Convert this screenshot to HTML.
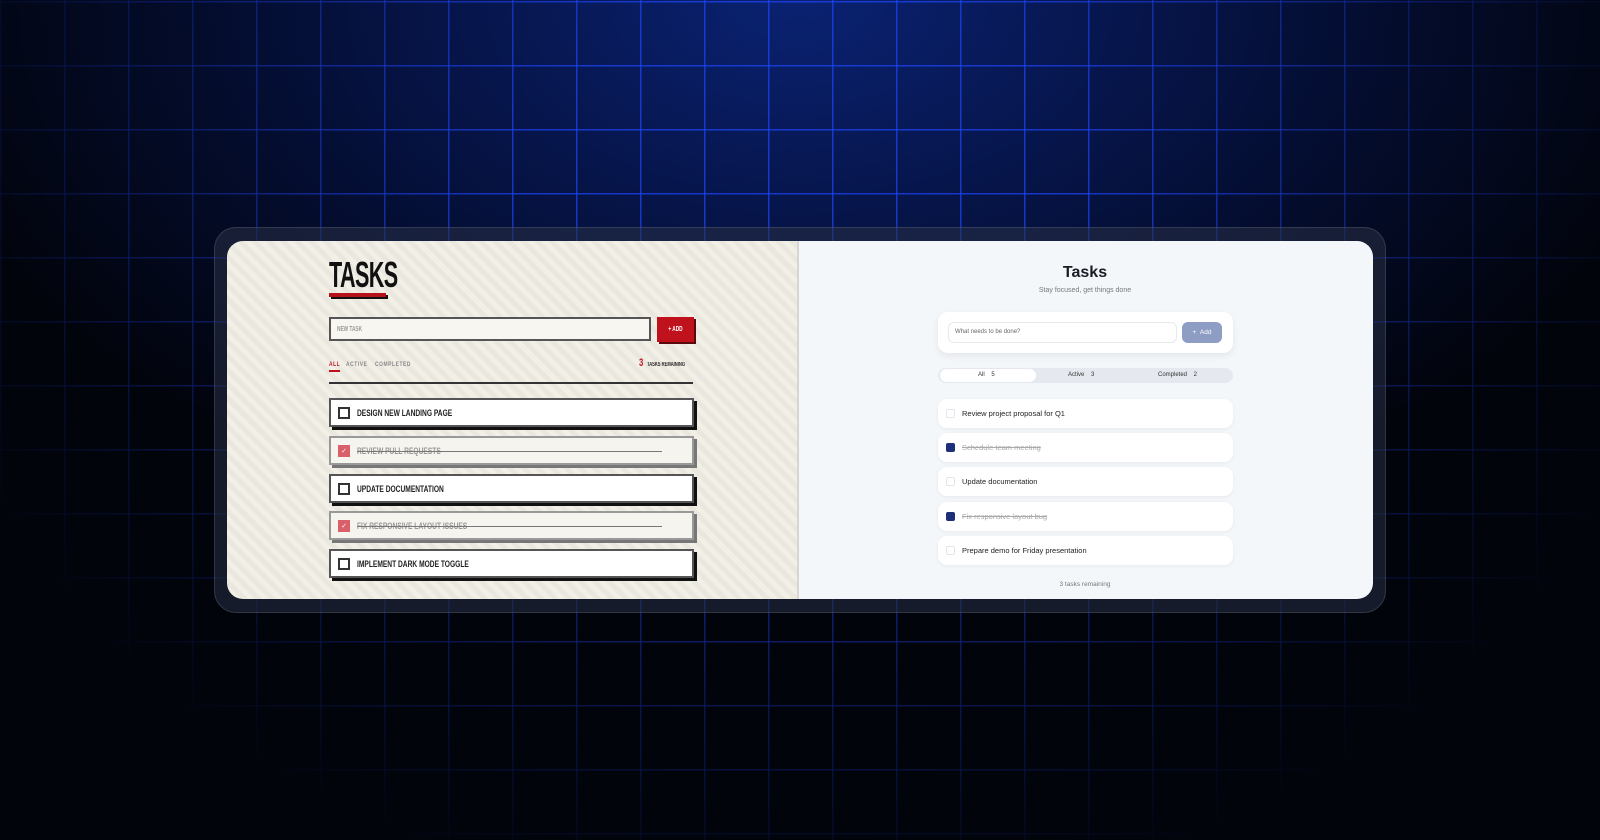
<!DOCTYPE html>
<html><head><meta charset="utf-8"><style>
*{margin:0;padding:0;box-sizing:border-box}
body{width:1600px;height:840px;overflow:hidden;background:#02040c;position:relative;font-family:"Liberation Sans",sans-serif}
.bg{position:absolute;inset:0;background:radial-gradient(ellipse 900px 560px at 800px 0px,#0a2272 0%,#061448 40%,#030a24 75%,#02040c 100%)}
.grid{position:absolute;inset:0;background-image:linear-gradient(to right,rgba(30,70,255,.7) 1.5px,transparent 1.5px),linear-gradient(to bottom,rgba(30,70,255,.7) 1.5px,transparent 1.5px);background-size:64px 64px;background-position:0 1px;
-webkit-mask-image:radial-gradient(ellipse 900px 720px at 800px 200px,#000 30%,rgba(0,0,0,.4) 70%,transparent 100%);mask-image:radial-gradient(ellipse 900px 720px at 800px 200px,#000 30%,rgba(0,0,0,.4) 70%,transparent 100%)}
.frame{position:absolute;left:214px;top:227px;width:1172px;height:386px;border-radius:22px;background:rgba(40,48,70,.55);border:1px solid rgba(255,255,255,.12)}
.left{position:absolute;left:227px;top:241px;width:570px;height:358px;border-radius:16px 0 0 16px;background:#f2efe7 repeating-linear-gradient(45deg,rgba(0,0,0,.035) 0 5px,transparent 5px 10px);overflow:hidden}
.right{position:absolute;left:797px;top:241px;width:576px;height:358px;border-radius:0 16px 16px 0;background:#f4f7fa;border-left:2px solid #d8d6d0}
.n{font-family:"Liberation Sans",sans-serif;font-weight:bold;white-space:nowrap}
.sq{display:inline-block;transform:scaleX(.68);transform-origin:0 0}
.abs{position:absolute}
.ttl{left:329px;top:257px;font-size:36px;letter-spacing:-1px;color:#111;line-height:36px;transform:scaleX(.6);transform-origin:0 0}
.ul{left:329px;top:293px;width:57px;height:4px;background:#b5121b;box-shadow:2px 2px 0 #111}
.inp{left:329px;top:317px;width:322px;height:24px;border:2px solid #555;background:#f8f6f0;font-size:7px;color:#999;padding:7px 6px}
.add{left:657px;top:317px;width:37px;height:25px;background:#c0121c;color:#fff;font-size:7px;text-align:center;line-height:25px;box-shadow:2px 2px 0 #5a0a0e}
.tab{top:361px;font-size:6.5px;letter-spacing:.8px;color:#888;transform:scaleX(.75);transform-origin:0 0}
.rule{left:329px;top:382px;width:364px;height:2px;background:#333}
.it{left:329px;width:365px;height:29px;background:#fff;border:2px solid #555;box-shadow:3px 3px 0 #111}
.it.done{background:#f6f4ee;box-shadow:3px 3px 0 #777;border-color:#999}
.cb{position:absolute;left:7px;top:7px;width:12px;height:12px;border:2px solid #333;background:#fff}
.done .cb{background:#d9606a;border-color:#d9606a;color:#fff;font-size:7px;text-align:center;line-height:9px}
.it span{position:absolute;left:26px;top:8px;font-size:9.5px;color:#222;transform:scaleX(.7);transform-origin:0 0}
.done span{color:#999;text-decoration:line-through}
.done i{position:absolute;left:26px;right:30px;top:13px;height:1px;background:#777}
.rt{font-family:"Liberation Sans",sans-serif}
.card{left:938px;top:312px;width:295px;height:41px;background:#fff;border-radius:10px;box-shadow:0 3px 8px rgba(0,0,0,.07)}
.ri{left:948px;top:322px;width:229px;height:21px;border:1px solid #e6e9ee;border-radius:6px;font-size:6px;color:#666;padding:6px 6px}
.rb{left:1182px;top:322px;width:40px;height:21px;border-radius:6px;background:#8e9dc4;color:#fff;font-size:6.5px;text-align:center;line-height:21px}
.tabs{left:938px;top:368px;width:295px;height:15px;border-radius:8px;background:#e5e8ee}
.pill{left:940px;top:369px;width:96px;height:13px;border-radius:7px;background:#fff}
.tl{top:372px;font-size:6px;color:#333}
.ri2{left:938px;width:295px;height:29px;background:#fff;border-radius:9px;box-shadow:0 1px 4px rgba(0,0,0,.06)}
.ri2 b{position:absolute;left:8px;top:10px;width:9px;height:9px;border:1px solid #e3e6ea;border-radius:2px}
.ri2.d b{background:#1e2f7a;border-color:#1e2f7a}
.ri2 span{position:absolute;left:24px;top:10px;font-size:7.5px;color:#222}
.ri2.d span{color:#aaa;text-decoration:line-through}
</style></head><body>
<div class="bg"></div><div class="grid"></div>
<div class="frame"></div>
<div class="left"></div>
<div class="right"></div>
<div class="abs n ttl">TASKS</div>
<div class="abs ul"></div>
<div class="abs n inp"><span class="sq">NEW TASK</span></div>
<div class="abs n add"><span class="sq" style="transform-origin:50% 0">+ ADD</span></div>
<div class="abs n tab" style="left:329px;color:#c0121c">ALL</div>
<div class="abs" style="left:329px;top:370px;width:11px;height:2px;background:#c0121c"></div>
<div class="abs n tab" style="left:346px">ACTIVE</div>
<div class="abs n tab" style="left:375px">COMPLETED</div>
<div class="abs n" style="left:639px;top:357px;font-size:11px;color:#c0121c;transform:scaleX(.7);transform-origin:0 0">3</div>
<div class="abs n" style="left:647px;top:362px;font-size:6px;color:#222;transform:scaleX(.68);transform-origin:0 0">TASKS REMAINING</div>
<div class="abs rule"></div>
<div class="abs it" style="top:398px"><div class="cb"></div><span class="n">DESIGN NEW LANDING PAGE</span></div>
<div class="abs it done" style="top:436px"><div class="cb">✓</div><span class="n">REVIEW PULL REQUESTS</span><i></i></div>
<div class="abs it" style="top:474px"><div class="cb"></div><span class="n">UPDATE DOCUMENTATION</span></div>
<div class="abs it done" style="top:511px"><div class="cb">✓</div><span class="n">FIX RESPONSIVE LAYOUT ISSUES</span><i></i></div>
<div class="abs it" style="top:549px"><div class="cb"></div><span class="n">IMPLEMENT DARK MODE TOGGLE</span></div>

<div class="abs rt" style="left:985px;width:200px;top:264px;text-align:center;font-size:16px;font-weight:bold;color:#1a1d24">Tasks</div>
<div class="abs rt" style="left:985px;width:200px;top:287px;text-align:center;font-size:7px;color:#777">Stay focused, get things done</div>
<div class="abs card"></div>
<div class="abs ri rt">What needs to be done?</div>
<div class="abs rb rt">+&nbsp;&nbsp;Add</div>
<div class="abs tabs"></div><div class="abs pill"></div>
<div class="abs tl rt" style="left:978px">All&nbsp;&nbsp;&nbsp;&nbsp;5</div>
<div class="abs tl rt" style="left:1068px">Active&nbsp;&nbsp;&nbsp;&nbsp;3</div>
<div class="abs tl rt" style="left:1158px">Completed&nbsp;&nbsp;&nbsp;&nbsp;2</div>
<div class="abs ri2 rt" style="top:399px"><b></b><span>Review project proposal for Q1</span></div>
<div class="abs ri2 d rt" style="top:433px"><b></b><span>Schedule team meeting</span></div>
<div class="abs ri2 rt" style="top:467px"><b></b><span>Update documentation</span></div>
<div class="abs ri2 d rt" style="top:502px"><b></b><span>Fix responsive layout bug</span></div>
<div class="abs ri2 rt" style="top:536px"><b></b><span>Prepare demo for Friday presentation</span></div>
<div class="abs rt" style="left:985px;width:200px;top:581px;text-align:center;font-size:6.5px;color:#777">3 tasks remaining</div>
</body></html>
